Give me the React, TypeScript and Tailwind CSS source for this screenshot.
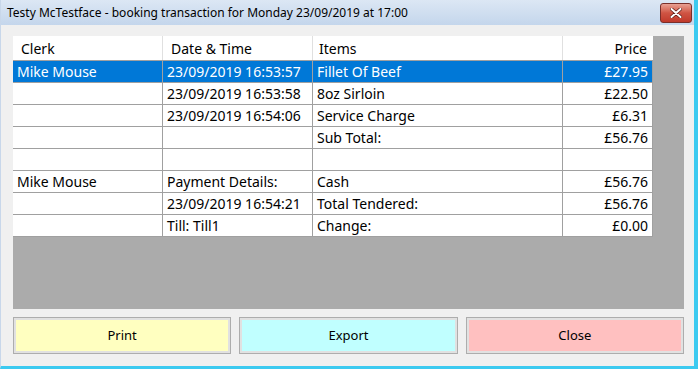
import React from 'react';

type Row = { clerk: string; date: string; item: string; price: string; selected?: boolean };

const rows: Row[] = [
  { clerk: 'Mike Mouse', date: '23/09/2019 16:53:57', item: 'Fillet Of Beef', price: '£27.95', selected: true },
  { clerk: '', date: '23/09/2019 16:53:58', item: '8oz Sirloin', price: '£22.50' },
  { clerk: '', date: '23/09/2019 16:54:06', item: 'Service Charge', price: '£6.31' },
  { clerk: '', date: '', item: 'Sub Total:', price: '£56.76' },
  { clerk: '', date: '', item: '', price: '' },
  { clerk: 'Mike Mouse', date: 'Payment Details:', item: 'Cash', price: '£56.76' },
  { clerk: '', date: '23/09/2019 16:54:21', item: 'Total Tendered:', price: '£56.76' },
  { clerk: '', date: 'Till: Till1', item: 'Change:', price: '£0.00' },
];

const cell = 'h-[22px] border-r border-b border-[#a0a0a0] px-[4px] flex items-center whitespace-nowrap overflow-hidden';

const Button: React.FC<{ label: string; fill: string }> = ({ label, fill }) => (
  <div className="flex-1 h-[37px] border border-[#adadad] bg-[#e1e1e1] p-[2px]">
    <div className={`h-full ${fill} flex items-center justify-center text-[13px] text-black`}>{label}</div>
  </div>
);

const App: React.FC = () => {
  return (
    <div
      className="w-[698px] h-[369px] flex flex-col bg-[#f0f0f0] border-l border-r-[4px] border-b-[3px] border-l-[#c8d7ea] border-r-[#3ccaf0] border-b-[#3ccaf0] overflow-hidden"
      style={{ fontFamily: '"Noto Sans", "Open Sans", sans-serif' }}
    >
      <div className="h-[25px] shrink-0 flex items-center justify-between pl-[6px] pr-[2px] bg-gradient-to-b from-[#dce7f4] to-[#c4d6ec]">
        <span className="text-[12px] text-black">Testy McTestface - booking transaction for Monday 23/09/2019 at 17:00</span>
        <div className="w-[32px] h-[20px] rounded-[3px] border border-[#7a2f2a] bg-gradient-to-b from-[#e8a093] via-[#cf5443] to-[#c0392b] flex items-center justify-center">
          <svg width="12" height="10" viewBox="0 0 12 10">
            <path d="M1.5 1 L10.5 9 M10.5 1 L1.5 9" stroke="#5a1a14" strokeWidth="3.4" strokeLinecap="round" />
            <path d="M1.5 1 L10.5 9 M10.5 1 L1.5 9" stroke="#ffffff" strokeWidth="2" strokeLinecap="round" />
          </svg>
        </div>
      </div>

      <div className="flex-1 flex flex-col pl-[12px] pr-[10px] pt-[11px] pb-[9px] gap-[8px]">
        <div className="h-[273px] bg-[#ababab]">
          <div className="w-[640px] bg-white text-[14px] text-black">
            <div className="grid grid-cols-[150px_150px_250px_90px] h-[25px] border-b border-[#a0a0a0]">
              <div className="border-r border-[#e0e0e0] pl-[8px] flex items-center">Clerk</div>
              <div className="border-r border-[#e0e0e0] pl-[8px] flex items-center">Date &amp; Time</div>
              <div className="border-r border-[#e0e0e0] pl-[6px] flex items-center">Items</div>
              <div className="pr-[6px] flex items-center justify-end">Price</div>
            </div>
            {rows.map((r, i) => (
              <div
                key={i}
                className={`grid grid-cols-[150px_150px_250px_90px] ${r.selected ? 'bg-[#0078d7] text-white' : ''}`}
              >
                <div className={cell}>{r.clerk}</div>
                <div className={cell}>{r.date}</div>
                <div className={cell}>{r.item}</div>
                <div className={`${cell} justify-end`}>{r.price}</div>
              </div>
            ))}
          </div>
        </div>

        <div className="flex gap-[8px]">
          <Button label="Print" fill="bg-[#ffffc0]" />
          <Button label="Export" fill="bg-[#c0ffff]" />
          <Button label="Close" fill="bg-[#ffc0c0]" />
        </div>
      </div>
    </div>
  );
};

export default App;
